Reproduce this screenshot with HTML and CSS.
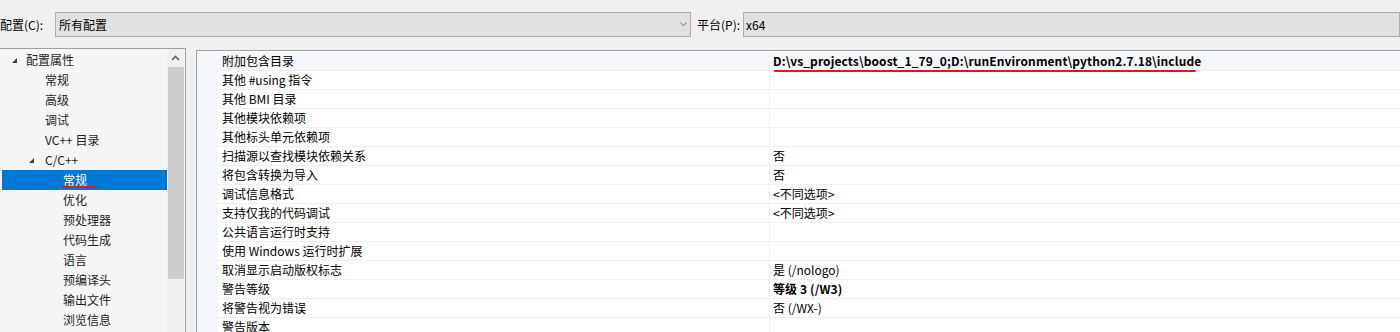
FILE: index.html
```html
<html lang="zh-CN">
  <head>
    <meta charset="UTF-8" />
    <title>属性页</title>
    <link rel="stylesheet" href="styles.css">
  </head>
  <body>
    <div class="toolbar">
      <label class="lbl cfg-lbl">配置(C):</label>
      <div class="combo cfg">
        <span>所有配置</span>
        <svg class="chev" width="7" height="5" viewBox="0 0 7 5"><path d="M0.5 0.5 L3.5 3.8 L6.5 0.5" fill="none" stroke="#707070" stroke-width="1"/></svg>
      </div>
      <label class="lbl plat-lbl">平台(P):</label>
      <div class="combo plat"><span>x64</span></div>
    </div>

    <div class="main">
      <div class="tree">
        <ul class="nodes">
          <li class="node lv0"><i class="tri"></i>配置属性</li>
          <li class="node lv1">常规</li>
          <li class="node lv1">高级</li>
          <li class="node lv1">调试</li>
          <li class="node lv1">VC++ 目录</li>
          <li class="node lv1 open"><i class="tri"></i>C/C++</li>
          <li class="node lv2 selected">常规<span class="mark mark-node"></span></li>
          <li class="node lv2">优化</li>
          <li class="node lv2">预处理器</li>
          <li class="node lv2">代码生成</li>
          <li class="node lv2">语言</li>
          <li class="node lv2">预编译头</li>
          <li class="node lv2">输出文件</li>
          <li class="node lv2">浏览信息</li>
        </ul>
        <div class="scrollbar">
          <div class="sb-up">
            <svg width="9" height="6" viewBox="0 0 9 6"><path d="M1 5 L4.5 1.5 L8 5" fill="none" stroke="#606060" stroke-width="1.6"/></svg>
          </div>
          <div class="sb-thumb"></div>
        </div>
      </div>

      <div class="grid">
        <div class="gutter"></div>
        <div class="rows">
          <div class="row current">
            <div class="name">附加包含目录</div>
            <div class="value strong">D:\vs_projects\boost_1_79_0;D:\runEnvironment\python2.7.18\include<span class="mark mark-path"></span></div>
          </div>
          <div class="row"><div class="name">其他 #using 指令</div><div class="value"></div></div>
          <div class="row"><div class="name">其他 BMI 目录</div><div class="value"></div></div>
          <div class="row"><div class="name">其他模块依赖项</div><div class="value"></div></div>
          <div class="row"><div class="name">其他标头单元依赖项</div><div class="value"></div></div>
          <div class="row"><div class="name">扫描源以查找模块依赖关系</div><div class="value">否</div></div>
          <div class="row"><div class="name">将包含转换为导入</div><div class="value">否</div></div>
          <div class="row"><div class="name">调试信息格式</div><div class="value">&lt;不同选项&gt;</div></div>
          <div class="row"><div class="name">支持仅我的代码调试</div><div class="value">&lt;不同选项&gt;</div></div>
          <div class="row"><div class="name">公共语言运行时支持</div><div class="value"></div></div>
          <div class="row"><div class="name">使用 Windows 运行时扩展</div><div class="value"></div></div>
          <div class="row"><div class="name">取消显示启动版权标志</div><div class="value">是 (/nologo)</div></div>
          <div class="row"><div class="name">警告等级</div><div class="value strong">等级 3 (/W3)</div></div>
          <div class="row"><div class="name">将警告视为错误</div><div class="value">否 (/WX-)</div></div>
          <div class="row"><div class="name">警告版本</div><div class="value"></div></div>
        </div>
      </div>
    </div>
  </body>
</html>
```

FILE: styles.css
```css
body {
  margin: 0;
  height: 332px;
  overflow: hidden;
  background: #f0f0f0;
  font-family: "Noto Sans CJK SC", "Noto Sans", sans-serif;
  font-size: 12px;
  color: #000;
}

/* top bar */
.toolbar {
  display: flex;
  align-items: center;
  height: 48px;
}
.lbl {
  line-height: 25px;
  white-space: nowrap;
}
.cfg-lbl {
  width: 55px;
}
.plat-lbl {
  margin-left: 6px;
  margin-right: 3px;
}
.combo {
  display: flex;
  align-items: center;
  height: 25px;
  box-sizing: border-box;
  background: #e1e1e1;
  border: 1px solid #adadad;
  padding-left: 3px;
}
.cfg {
  width: 636px;
}
.cfg span {
  flex: 1;
}
.chev {
  margin-right: 3px;
  margin-top: 1px;
}
.plat {
  flex: 1;
  padding-left: 2px;
}

.main {
  display: flex;
  height: 284px;
}

/* tree */
.tree {
  display: flex;
  width: 186px;
  box-sizing: border-box;
  border-top: 1px solid #a0a0a0;
  border-right: 1px solid #a0a0a0;
  background: #f5f5f5;
}
.nodes {
  list-style: none;
  margin: 0;
  padding: 1px 0 0 2px;
  width: 165px;
}
.node {
  position: relative;
  height: 20px;
  line-height: 20px;
  white-space: nowrap;
  color: #1e1e1e;
}
.lv0 { padding-left: 24px; }
.lv1 { padding-left: 43px; }
.lv2 { padding-left: 61px; }
.node.selected {
  background: #0078d7;
  color: #fff;
}
.tri {
  position: absolute;
  top: 8px;
  width: 0;
  height: 0;
  border-left: 5px solid transparent;
  border-bottom: 5px solid #3c3c3c;
}
.lv0 .tri { left: 10px; }
.lv1 .tri { left: 27px; }

.scrollbar {
  width: 17px;
  background: #f0f0f0;
  display: flex;
  flex-direction: column;
}
.sb-up {
  height: 18px;
  display: flex;
  align-items: center;
  justify-content: center;
}
.sb-thumb {
  height: 212px;
  margin-left: 1px;
  background: #cdcdcd;
}

/* property grid */
.grid {
  flex: 1;
  display: flex;
  margin: 2px 0 0 10px;
  border-top: 1px solid #a0a0a0;
  border-left: 1px solid #a0a0a0;
  background: #fff;
}
.gutter {
  width: 21px;
  background: #f3f6fb;
}
.rows {
  flex: 1;
  padding-top: 1px;
}
.row {
  display: flex;
  height: 19px;
  box-sizing: border-box;
  border-bottom: 1px solid #eeeff3;
  line-height: 18px;
  white-space: nowrap;
}
.row.current {
  background: #f4f6fa;
}
.name {
  width: 552px;
  padding-left: 4px;
  box-sizing: border-box;
  border-right: 1px solid #eeeff3;
}
.value {
  position: relative;
  padding-left: 3px;
}
.strong {
  font-weight: bold;
  letter-spacing: 0.1px;
}

/* red hand-drawn marks */
.mark {
  position: absolute;
  height: 2px;
  background: #e3161b;
  border-radius: 1px;
}
.mark-node {
  left: 60px;
  width: 35px;
  top: 16px;
}
.mark-path {
  left: 4px;
  width: 422px;
  top: 18px;
}
```
